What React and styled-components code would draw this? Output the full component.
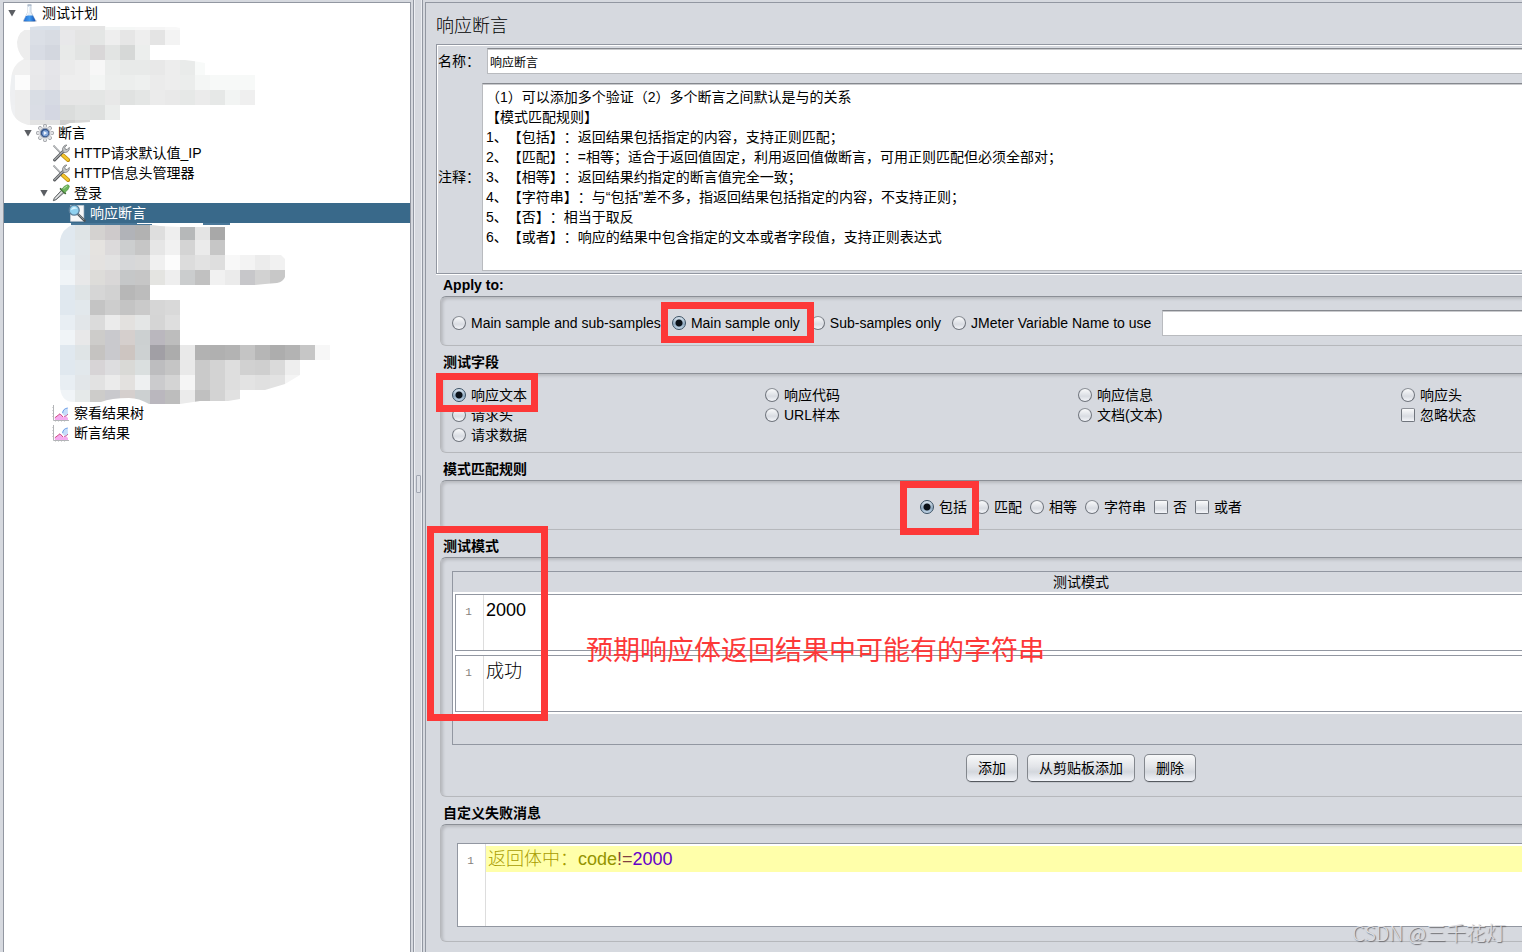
import React from "react";
import styled, { createGlobalStyle, css } from "styled-components";

const sans = `"Liberation Sans", "Noto Sans CJK SC", sans-serif`;
const border = "#9297a1";
const control = "#d6d9df";

const GlobalStyle = createGlobalStyle`
  * {
    box-sizing: border-box;
  }

  body {
    margin: 0;
    background: ${control};
    color: #000000;
    font-family: ${sans};
    font-size: 14px;
    line-height: 20px;
    text-spacing-trim: space-all;
  }

  input,
  textarea,
  button {
    margin: 0;
    font: inherit;
    color: inherit;
  }
`;

const Window = styled.div`
  position: relative;
  display: flex;
  min-height: 100vh;
  overflow: hidden;
`;

/* ---------- tree ---------- */

const Sidebar = styled.nav`
  flex: 0 0 411px;
  display: flex;
  padding: 2px 0 0 3px;
`;

const Tree = styled.ul`
  flex: 1;
  margin: 0;
  padding: 0;
  list-style: none;
  background: #ffffff;
  border: 1px solid ${border};
  border-bottom: none;
`;

const TreeRow = styled.li`
  display: flex;
  align-items: center;
  gap: 4px;
  height: 20px;
  padding-left: ${props => 4 + props.$level * 16}px;
  white-space: nowrap;
  ${props =>
    props.$selected &&
    css`
      background: #39698a;
      color: #ffffff;
    `}
`;

const Arrow = styled.span`
  width: 8px;
  height: 7px;
  background: ${props => (props.$open ? "#5b5e63" : "transparent")};
  clip-path: polygon(0 0, 100% 0, 50% 100%);
`;

const TreeIcon = styled.svg`
  width: 18px;
  height: 18px;
  flex: none;
`;

const HiddenRows = styled.li`
  height: ${props => props.$rows * 20}px;
`;

const MosaicArt = styled.svg`
  display: block;
  width: 406px;
  height: 100%;
  overflow: visible;
`;

const FlaskIcon = () => (
  <TreeIcon viewBox="0 0 18 18">
    <defs>
      <linearGradient id="flask" x1="0" y1="0" x2="1" y2="0">
        <stop offset="0" stopColor="#2a6fd0" />
        <stop offset=".5" stopColor="#3f9af0" />
        <stop offset="1" stopColor="#1450b0" />
      </linearGradient>
    </defs>
    <ellipse cx="10" cy="17" rx="7" ry="1" fill="#c9cbd2" />
    <path d="M8 1h3v7l4.600 8.500q.3 1-.8 1H4.300q-1.100 0-.8-1L8 8z" fill="#e4eef8" stroke="#a9b7c8" strokeWidth=".7" />
    <path d="M6.200 11.500h6.700l2.500 5q.2.800-.7.800H4.500q-.8 0-.6-.8z" fill="url(#flask)" />
    <path d="M8.500 3v5l-2 4" fill="none" stroke="#ffffff" strokeWidth=".9" />
    <path d="M7.400 1h4.200" stroke="#9aa9bb" strokeWidth="1" />
  </TreeIcon>
);

const GearIcon = () => (
  <TreeIcon viewBox="0 0 18 18">
    <g stroke="#94979c" strokeWidth="4" strokeLinecap="round">
      <path d="M9 2v14M2 9h14M4.100 4.100l9.800 9.800M13.900 4.100l-9.800 9.800" />
    </g>
    <g stroke="#e2e3e6" strokeWidth="2.600" strokeLinecap="round">
      <path d="M9 2v14M2 9h14M4.100 4.100l9.800 9.800M13.900 4.100l-9.800 9.800" />
    </g>
    <circle cx="9" cy="9" r="6.600" fill="#dfe0e3" />
    <circle cx="9" cy="9" r="4.700" fill="#34558c" stroke="#9aa1ae" strokeWidth="1" />
    <circle cx="9.300" cy="9.300" r="3" fill="#86a9dc" />
    <path d="M7.900 7.200l3.200 1.900-3.200 1.900z" fill="#f2f6fc" />
  </TreeIcon>
);

const ToolsIcon = () => (
  <TreeIcon viewBox="0 0 18 18">
    <path d="M1.500 1.500l9 9.500" stroke="#84878a" strokeWidth="1.700" />
    <path d="M1.300 1.300l8 8.400" stroke="#d9dbdd" strokeWidth=".7" />
    <path d="M10.800 11.300l5.300 4.800" stroke="#b98a12" strokeWidth="4" strokeLinecap="round" />
    <path d="M10.800 11.100l5 4.600" stroke="#f4c62c" strokeWidth="2.600" strokeLinecap="round" />
    <path d="M2.600 16L12 6.500" stroke="#55585b" strokeWidth="3" strokeLinecap="round" />
    <path d="M2.700 15.600L12 6.300" stroke="#a9acae" strokeWidth="1.300" strokeLinecap="round" />
    <path d="M11 7.600q-1.600-3.400 1.200-5.800 1.300-.9 2.700-.8l-2.100 2.200.4 1.900 1.900.5 2.200-2.200q.4 2.800-1.500 4.200-2.100 1.500-4 .8z" fill="#c3c6c8" stroke="#6b6e71" strokeWidth=".7" />
  </TreeIcon>
);

const DropperIcon = () => (
  <TreeIcon viewBox="0 0 18 18">
    <path d="M1.300 16.700l1-2.600 7.400-8 2.500 2.400-8.100 7.200z" fill="#b9bcbe" stroke="#55585a" strokeWidth=".9" />
    <path d="M3.200 14.700l7-7.200" stroke="#f4f5f5" strokeWidth="1" />
    <path d="M8.600 4.800l4.700 4.600" stroke="#3f6a35" strokeWidth="1.800" strokeLinecap="round" />
    <path d="M9.600 5.600Q12 1.700 15.300.8q2 .1 2 1.900-1 3.700-4.700 5.800z" fill="#6cb55a" stroke="#4f8f42" strokeWidth=".7" />
    <path d="M11.700 4.800q1.600-2.200 3.500-2.800" fill="none" stroke="#b7e3a9" strokeWidth="1" />
  </TreeIcon>
);

const AssertionIcon = () => (
  <TreeIcon viewBox="0 0 18 18">
    <path d="M2.500 1.500h13.300v15.800H2.500z" fill="#f7f7f8" stroke="#d0d3d8" strokeWidth=".6" />
    <path d="M9.800 10l6.700 6.700" stroke="#4c5257" strokeWidth="2.400" strokeLinecap="round" />
    <path d="M10.300 10.200l5.700 5.700" stroke="#a8adb1" strokeWidth=".8" />
    <circle cx="6.200" cy="6.200" r="5" fill="#8fd0ef" stroke="#5c7f9b" strokeWidth="1.300" />
    <path d="M3 6.300q.3-3 3.300-3.300 2.300.1 2.800 1.900-3.800-.5-6.100 1.400z" fill="#d9f2fc" />
  </TreeIcon>
);

const ResultIcon = () => (
  <TreeIcon viewBox="0 0 18 18">
    <path d="M1.500 1v15.500H17" fill="none" stroke="#b2b4b7" strokeWidth="1" />
    <path d="M.5 3.500h1m-1 3h1m-1 3h1m-1 3h1m2 4v1m3-1v1m3-1v1m3-1v1" stroke="#b2b4b7" strokeWidth="1" />
    <path d="M3 16v-2l5-4 3.300 3.200L14 12l2 2v2z" fill="#f4a9ee" />
    <path d="M2.800 13.800L8 9.800l3 3.200" fill="none" stroke="#cf4a86" strokeWidth="1" />
    <path d="M15.700 4q-5 .3-5.300 5.300.7 2.800 3.300 2.900l2.300-1.300z" fill="#c6dcfa" />
    <path d="M15.800 4q-4.700.5-5.200 5" fill="none" stroke="#6f9fe6" strokeWidth="1" />
    <path d="M12 12.600l2.300-.8 1.700-1.800" fill="none" stroke="#cf4a86" strokeWidth=".8" />
  </TreeIcon>
);

// every line of a mosaic is a band of 15px blocks: [top, first column, colours]
const upperMosaic = [
  [15, 2, "d9e1ea d9e1ea e6e6e6 e6e6e6 e4e4e4 f5f7f6 f5f7f6 f7f7f7 f5f5f5 f8f8f8"],
  [30, 1, "ededed dbdfe6 d8dce3 e8e8ea e4e4e4 e4e6e5 eeeeee e6e6e6 eeeeee e4e4e4 f3f3f3"],
  [45, 1, "ededed d8dce4 d3d7df e8eae9 e2e4e3 d9d7d8 e2e4e3 d6d8d7 eceeed"],
  [60, 0, "f0f0f0 f0f0f0 e9e9eb e5e5e9 ebebeb eeeeee f7f7f7 ebedec e8eae9 e8eae9 e8e8e8 ededed e9ebea f8faf9"],
  [75, 0, "eef0f2 fcfcfc e8e8ea e4e4e8 eeeeee eeeeee f3f5f4 eceeed eceeed eef0ef ebebeb ededed ebedec f4f6f5 f7f9f8 f7f9f8 f7f9f8"],
  [90, 0, "eeeff1 ededed d9dde4 d6dae3 e6e6e6 e6e6e6 e4e6e5 e8e8e8 e0e2e1 e4e6e5 ebebeb e9e9e9 e6e8e7 ebebeb e6e8e7 f2f4f3 efefef"],
  [105, 0, "eff0f2 ededed dadde5 d4d7e2 dbdddc e0e2e1 dee0df ebedec"],
  [120, 0, "eff0f2 ededed e3e3e3 e3e3e3 cfcfcf d8d8d8"]
];

const lowerMosaic = [
  [225, 4, "e0e8ef dfe4e6 d4d2d0 cecacb b1b3b8 b2b2b2 dedede eeeeee b6b8b9 e4e4e4 a8a8a8"],
  [240, 4, "e1e9ef e2e7ea e5e3e0 dcdadb cccecf c6c6c6 e6e6e6 f1f1f1 d4d4d4 ebebeb c6c6c6"],
  [255, 4, "e9eff3 e2e6e9 e4e2e0 e2e2e2 d6d7d9 d8d8d8 f0f0f0 fcfcfc dcdcdc e2e2e2 dedede f8f8f8 f3f3f3 ececec f1f1f1"],
  [270, 4, "f0f4f7 e8e8e9 dddcd9 d9d7d7 c5c7c8 c6c6c6 e4e4e1 eeeeee cbcdce c1c1c1 f1f1f1 ebebeb c7c7ca d2d2d2 c8c8c8"],
  [285, 4, "e0e8ef dfe4e6 d6d6d6 d2d2d2 b7b7b7 bcbcbc"],
  [300, 4, "e0e8ef e2e8ec c4c4c4 cdcdcd c4c4c4 cacaca d6d6d6 d9d9d9"],
  [315, 4, "e8eef3 e2e6e9 dbdbdb ebebeb e3e1df e4e6e6 d5d5d5 dedede"],
  [330, 4, "f0f4f7 e8e8e9 cdccca c9c9cd d5cfcd ccd0d1 bab7be bdbdbd"],
  [345, 4, "e0e8ef dfe4e6 c5c3c1 c9c9cd cdc5c1 cdd1d2 a19fa5 acacac e9e9e9 b2b2b2 b0b0b0 b3b3b3 c4c4c4 b6b6b6 adadad b3b3b3 c6c6c6 f7f7f7"],
  [360, 4, "e0e8ef e2e8ec d7d4d6 dddddf d9d9d6 dadfdf bdbdbf c5c5c5 e9e9e9 cacaca d3d3d3 dedede d1d1d1 cfcfcf dadada eeeeee"],
  [375, 4, "e8eef3 e2e6e9 e2e2e2 ebebeb e3e1df eef0f1 cbcbcd d4d4d4 f5f5f5 cacaca d3d3d3 dedede e3e3e3 e0e0e0 e2e2e2 f4f4f4"],
  [390, 4, "f0f4f7 e5e9e9 cdccca c9c9cd d5cfcd ccd0d1 bab7be bdbdbd ebebeb c0c0c0 d3d3d3 e1e1e1"]
];

const Mosaic = ({ id, bands, viewBox, outline, children }) => (
  <MosaicArt viewBox={viewBox} preserveAspectRatio="xMinYMin" aria-hidden="true">
    <clipPath id={id}>
      <path d={outline} />
    </clipPath>
    {children}
    <g clipPath={`url(#${id})`} shapeRendering="crispEdges">
      {bands.map(([top, first, colours]) =>
        colours.split(" ").map((colour, i) => (
          <rect
            key={`${top}-${i}`}
            x={(first + i) * 15}
            y={top}
            width="15"
            height="15"
            fill={`#${colour}`}
          />
        ))
      )}
    </g>
  </MosaicArt>
);

/* ---------- splitter ---------- */

const Splitter = styled.div`
  flex: 0 0 14px;
  display: flex;
  align-items: center;
  justify-content: center;
  padding: 16px 2px 0;
  background: linear-gradient(
    to right,
    ${control} 2px,
    ${border} 2px 3px,
    #eceef2 3px 4px,
    ${control} 4px 10px,
    #eceef2 10px 11px,
    ${border} 11px 12px,
    ${control} 12px
  );
`;

const Grip = styled.span`
  width: 5px;
  height: 18px;
  border: 1px solid #a2a7b2;
  border-radius: 1px;
  background: #dcdfe5;
`;

/* ---------- editor ---------- */

const Main = styled.main`
  position: relative;
  flex: 1;
  min-width: 0;
  margin-top: 2px;
  padding-left: 10px;
  border: 1px solid ${border};
  border-width: 1px 0 0 1px;
  overflow: hidden;
`;

/* the form is wider than the pane and runs out of it on the right */
const Form = styled.form`
  display: flex;
  flex-direction: column;
  gap: 6px;
  width: calc(100% + 204px);
`;

const Title = styled.h1`
  margin: 0;
  padding: 13px 0 8px;
  font-size: 18px;
  line-height: 20px;
  font-weight: 300;
`;

const Header = styled.div`
  margin-bottom: -5px;
`;

const Etched = styled.div`
  display: grid;
  grid-template-columns: 44px 1fr;
  align-items: center;
  row-gap: 9px;
  padding: 3px 0 2px;
  border: 1px solid ${border};
  box-shadow: inset 1px 1px #ffffff, 0 1px #ffffff;
`;

const FieldLabel = styled.label`
  padding-left: 1px;
`;

const TextField = styled.input`
  flex: 1;
  width: auto;
  min-width: 0;
  height: 26px;
  margin-left: ${props => props.$indent || 0}px;
  padding: 0 2px;
  border: 1px solid #b9bbbf;
  border-top-color: #85888e;
  border-radius: 0;
  background: #ffffff;
  box-shadow: inset 0 1px #c9cacd;
  font-size: 12px;
  outline: none;
`;

const Comments = styled.textarea`
  display: block;
  height: 188px;
  margin-left: 1px;
  padding: 3px;
  border: 1px solid #b9bbbf;
  border-top-color: #85888e;
  border-radius: 0;
  background: #ffffff;
  box-shadow: inset 0 1px #c9cacd;
  resize: none;
  outline: none;
`;

const Section = styled.section`
  padding: 0 4px;
`;

const SectionTitle = styled.h2`
  margin: 0;
  padding: 0 0 1px 3px;
  font-size: 14px;
  line-height: 20px;
  font-weight: bold;
`;

const Frame = styled.div`
  padding: ${props => props.$pad};
  border: 1px solid #b6b8bc;
  border-top-color: #8b8f96;
  border-radius: 6px;
  box-shadow: inset 2px 2px 3px rgba(0, 0, 0, 0.14);
`;

const Options = styled.div`
  display: flex;
  align-items: center;
  justify-content: ${props => (props.$centered ? "center" : "flex-start")};
  gap: ${props => (props.$centered ? 8 : 11)}px;
`;

const FieldGrid = styled.div`
  display: grid;
  grid-template-columns: 313fr 313fr 323fr 309fr;
`;

const Choice = styled.label`
  display: flex;
  align-items: center;
  gap: 5px;
  line-height: 20px;
  white-space: nowrap;
`;

const Mark = styled.input`
  appearance: none;
  width: 14px;
  height: 14px;
  border: 1px solid #70757d;
  border-top-color: #8d9198;
  border-radius: ${props => (props.type === "radio" ? "50%" : "2px")};
  background: linear-gradient(#fafbfc, #d9dce2 60%, #f3f5f9);

  &:checked {
    border-color: #3a5063;
    background: radial-gradient(circle, #0b1118 3px, transparent 4px),
      linear-gradient(#dbe6f0, #8fa9c0 60%, #c4d8ea);
  }
`;

const Option = ({ type = "radio", group, label, checked }) => (
  <Choice>
    <Mark type={type} name={group} defaultChecked={checked} />
    {label}
  </Choice>
);

const PatternTable = styled.table`
  width: 100%;
  border: 1px solid ${border};
  border-collapse: separate;
  border-spacing: 0;

  th {
    height: 20px;
    padding: 0;
    font-weight: normal;
  }

  td {
    padding: 2px;
    background: #ffffff;
  }

  tfoot td {
    height: 30px;
    background: ${control};
  }
`;

const CodeBox = styled.div`
  display: flex;
  height: ${props => props.$height}px;
  border: 1px solid ${border};
  background: #ffffff;
`;

const Gutter = styled.span`
  flex: 0 0 28px;
  padding: 6px 2px 0 0;
  border-right: 1px solid #dddddd;
  color: #85817c;
  font-family: "Liberation Mono", monospace;
  font-size: 11px;
  line-height: 22px;
  text-align: center;
`;

const CodeLine = styled.div`
  flex: 1;
  align-self: flex-start;
  height: 26px;
  margin-top: 2px;
  padding: 0 2px;
  background: ${props => (props.$current ? "#ffffaa" : "transparent")};
  font-size: 18px;
  line-height: 26px;
  font-weight: 300;
`;

const Token = styled.span`
  color: ${props => props.$color};
`;

const Buttons = styled.div`
  display: flex;
  justify-content: center;
  gap: 9px;
  padding-top: 9px;
`;

const Button = styled.button`
  height: 28px;
  padding: 0 11px;
  border: 1px solid #83878d;
  border-bottom-color: #55595f;
  border-radius: 5px;
  background: linear-gradient(#f8f9fa, #e2e4e8 45%, #d3d7dd 65%, #f3f5fa);
  box-shadow: 0 1px #c4c7cd;
`;

/* ---------- annotations laid over the window ---------- */

const Highlight = styled.div`
  position: absolute;
  left: ${props => props.$x}px;
  top: ${props => props.$y}px;
  width: ${props => props.$w}px;
  height: ${props => props.$h}px;
  border: 7px solid #fd3838;
  pointer-events: none;
`;

const Note = styled.p`
  position: absolute;
  left: 586px;
  top: 635px;
  margin: 0;
  color: #fd3838;
  font-size: 27px;
  line-height: 32px;
  white-space: nowrap;
`;

const Watermark = styled.span`
  position: absolute;
  right: 16px;
  bottom: 6px;
  color: #dcdde1;
  font-family: "Noto Sans CJK SC", sans-serif;
  font-size: 20px;
  line-height: 26px;
  font-weight: 300;
  text-shadow: 1px 1px 1px #6c6c70;
`;

const comments = `（1）可以添加多个验证（2）多个断言之间默认是与的关系
【模式匹配规则】
1、【包括】：返回结果包括指定的内容，支持正则匹配；
2、【匹配】：=相等；适合于返回值固定，利用返回值做断言，可用正则匹配但必须全部对；
3、【相等】：返回结果约指定的断言值完全一致；
4、【字符串】：与“包括”差不多，指返回结果包括指定的内容，不支持正则；
5、【否】：相当于取反
6、【或者】：响应的结果中包含指定的文本或者字段值，支持正则表达式`;

const fields = [
  { label: "响应文本", checked: true },
  { label: "响应代码" },
  { label: "响应信息" },
  { label: "响应头" },
  { label: "请求头" },
  { label: "URL样本" },
  { label: "文档(文本)" },
  { label: "忽略状态", type: "checkbox" },
  { label: "请求数据" }
];

const rules = [
  { label: "包括", checked: true },
  { label: "匹配" },
  { label: "相等" },
  { label: "字符串" },
  { label: "否", type: "checkbox" },
  { label: "或者", type: "checkbox" }
];

const Node = ({ level, open, selected, icon, children }) => (
  <TreeRow $level={level} $selected={selected} role="treeitem" aria-selected={!!selected}>
    <Arrow $open={open} />
    {icon}
    {children}
  </TreeRow>
);

const TestPlanTree = () => (
  <Sidebar>
    <Tree role="tree">
      <Node level={0} open icon={<FlaskIcon />}>测试计划</Node>
      <HiddenRows $rows={5} role="none">
        <Mosaic
          id="upper"
          bands={upperMosaic}
          viewBox="4 23 406 100"
          outline="M30 27q8-1 15-1h60l1 1h70l4 1v17h-30v15h35q10 1 20 3v12h50v30H120v15H90l0 2q-10 1-20 1l-5 2H28Q13 121 11 108q-2-14 0-28 1-16 13-21Q17 52 17 42q1-11 13-15z"
        />
      </HiddenRows>
      <Node level={1} open icon={<GearIcon />}>断言</Node>
      <Node level={2} icon={<ToolsIcon />}>HTTP请求默认值_IP</Node>
      <Node level={2} icon={<ToolsIcon />}>HTTP信息头管理器</Node>
      <Node level={2} open icon={<DropperIcon />}>登录</Node>
      <Node level={3} selected icon={<AssertionIcon />}>响应断言</Node>
      <HiddenRows $rows={9} role="none">
        <Mosaic
          id="lower"
          bands={lowerMosaic}
          viewBox="4 223 406 180"
          outline="M72 225h80q15 2 38 2h35v28h56l4 4v18q-2 5-8 6l-12 1-10 1H150v15h30v45h150v15h-30v15l-15 9-20 6h-25v9l-12 2-28 0-20 3h-31q-10-6-20-6-18 0-28 4l-15 0H74Q60 402 60 385V240q2-11 12-15z"
        >
          <path d="M71 223h66v1h15v1H71zM203 223h27v2h-27z" fill="#4a7899" />
        </Mosaic>
      </HiddenRows>
      <Node level={2} icon={<ResultIcon />}>察看结果树</Node>
      <Node level={2} icon={<ResultIcon />}>断言结果</Node>
    </Tree>
  </Sidebar>
);

const App = () => (
  <Window>
    <GlobalStyle />
    <TestPlanTree />
    <Splitter>
      <Grip />
    </Splitter>
    <Main>
      <Form onSubmit={e => e.preventDefault()}>
        <Header>
          <Title>响应断言</Title>
          <Etched>
            <FieldLabel htmlFor="name">名称：</FieldLabel>
            <TextField id="name" $indent={6} defaultValue="响应断言" />
            <FieldLabel htmlFor="comments">注释：</FieldLabel>
            <Comments id="comments" defaultValue={comments} spellCheck={false} />
          </Etched>
        </Header>

        <Section>
          <SectionTitle>Apply to:</SectionTitle>
          <Frame $pad="13px 11px 9px">
            <Options role="radiogroup" aria-label="Apply to">
              <Option group="scope" label="Main sample and sub-samples" />
              <Option group="scope" label="Main sample only" checked />
              <Option group="scope" label="Sub-samples only" />
              <Option group="scope" label="JMeter Variable Name to use" />
              <TextField aria-label="JMeter Variable Name" />
            </Options>
          </Frame>
        </Section>

        <Section>
          <SectionTitle>测试字段</SectionTitle>
          <Frame $pad="11px 11px 7px">
            <FieldGrid role="radiogroup" aria-label="测试字段">
              {fields.map(field => (
                <Option key={field.label} group="field" {...field} />
              ))}
            </FieldGrid>
          </Frame>
        </Section>

        <Section>
          <SectionTitle>模式匹配规则</SectionTitle>
          <Frame $pad="16px 11px 12px">
            <Options $centered role="radiogroup" aria-label="模式匹配规则">
              {rules.map(rule => (
                <Option key={rule.label} group="rule" {...rule} />
              ))}
            </Options>
          </Frame>
        </Section>

        <Section>
          <SectionTitle>测试模式</SectionTitle>
          <Frame $pad="13px 11px 14px">
            <PatternTable>
              <thead>
                <tr>
                  <th scope="col">测试模式</th>
                </tr>
              </thead>
              <tbody>
                {["2000", "成功"].map(pattern => (
                  <tr key={pattern}>
                    <td>
                      <CodeBox $height={57}>
                        <Gutter>1</Gutter>
                        <CodeLine>{pattern}</CodeLine>
                      </CodeBox>
                    </td>
                  </tr>
                ))}
              </tbody>
              <tfoot>
                <tr>
                  <td />
                </tr>
              </tfoot>
            </PatternTable>
            <Buttons>
              <Button type="button">添加</Button>
              <Button type="button">从剪贴板添加</Button>
              <Button type="button">删除</Button>
            </Buttons>
          </Frame>
        </Section>

        <Section>
          <SectionTitle>自定义失败消息</SectionTitle>
          <Frame $pad="18px 16px 14px">
            <CodeBox $height={84}>
              <Gutter>1</Gutter>
              <CodeLine $current>
                <Token $color="#a89c00">返回体中：</Token>
                <Token $color="#949400">code</Token>
                <Token $color="#804040">!=</Token>
                <Token $color="#6400c8">2000</Token>
              </CodeLine>
            </CodeBox>
          </Frame>
        </Section>
      </Form>
    </Main>

    <Highlight $x={661} $y={302} $w={153} $h={41} />
    <Highlight $x={436} $y={373} $w={102} $h={39} />
    <Highlight $x={900} $y={481} $w={79} $h={54} />
    <Highlight $x={427} $y={526} $w={121} $h={195} />
    <Note>预期响应体返回结果中可能有的字符串</Note>
    <Watermark>CSDN @三千花灯</Watermark>
  </Window>
);

export default App;
